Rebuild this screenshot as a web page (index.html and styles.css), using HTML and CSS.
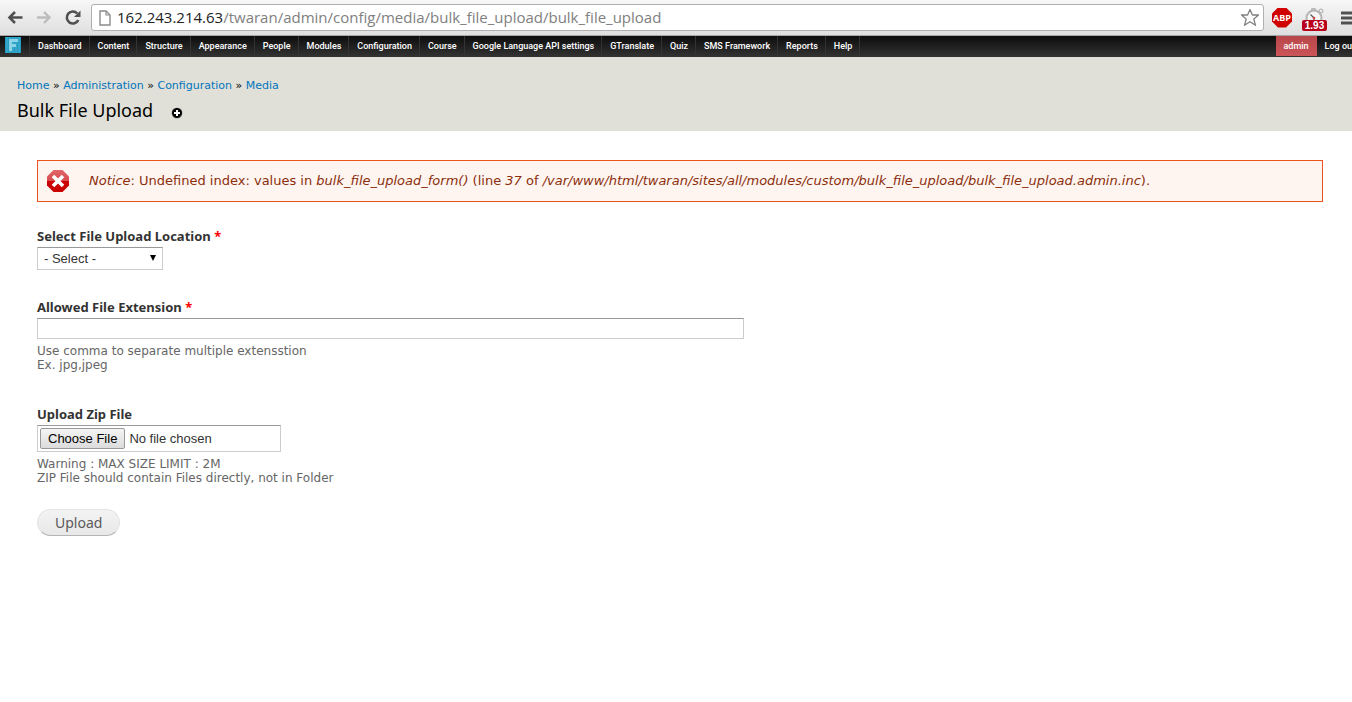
FILE: index.html
```html
<!DOCTYPE html>
<html lang="en">
<head>
    <meta charset="UTF-8">
    <meta name="viewport" content="width=device-width, initial-scale=1.0">
    <title>Bulk File Upload</title>
    <link rel="stylesheet" href="styles.css">
</head>
<body>
    <div class="browser-bar">
        <button class="nav-button" type="button" aria-label="Back">
            <svg width="16" height="16" viewBox="0 0 16 16"><path d="M8 2L2.500 7.500L8 13M3 7.500H15.500" fill="none" stroke="#505050" stroke-width="2.600"/></svg>
        </button>
        <button class="nav-button" type="button" aria-label="Forward">
            <svg width="16" height="16" viewBox="0 0 16 16"><path d="M8 2L13.500 7.500L8 13M13 7.500H1" fill="none" stroke="#bdbdbd" stroke-width="2.400"/></svg>
        </button>
        <button class="nav-button" type="button" aria-label="Reload">
            <svg width="16" height="16" viewBox="0 0 16 16"><path d="M13.300 10A6 6 0 1 1 12.300 3.500" fill="none" stroke="#505050" stroke-width="2.600"/><path d="M15.500 0.500V7H9z" fill="#505050"/></svg>
        </button>
        <div class="address-bar">
            <svg class="page-icon" width="12" height="16" viewBox="0 0 12 16"><path d="M1 1H7L11 5V15H1z" fill="#fff" stroke="#8c8c8c" stroke-width="1.400"/><path d="M7 1V5H11" fill="none" stroke="#8c8c8c" stroke-width="1.200"/></svg>
            <div class="address">162.243.214.63<span>/twaran/admin/config/media/bulk_file_upload/bulk_file_upload</span></div>
            <svg width="20" height="19" viewBox="0 0 20 19"><path d="M10 1.500L12.400 7H18.500L13.800 11L15.500 17.300L10 13.700L4.500 17.300L6.200 11L1.500 7H7.600z" fill="#fff" stroke="#808080" stroke-width="1.300" stroke-linejoin="round"/></svg>
        </div>
        <div class="extensions">
            <span class="abp">ABP</span>
            <div class="timer">
                <svg width="26" height="18" viewBox="0 0 26 18"><circle cx="19" cy="3" r="2" fill="#eee" stroke="#aaa"/><rect x="9" y="0" width="5" height="3" rx="1" fill="#bbb"/><circle cx="12" cy="10" r="7.500" fill="#f6f6f6" stroke="#b4b4b4" stroke-width="2"/><path d="M12 10L8.500 6.500M12 10V12" stroke="#555" stroke-width="1.200"/><circle cx="12" cy="10" r="1.300" fill="#c44"/></svg>
                <span class="timer-value">1.93</span>
            </div>
            <button class="nav-button" type="button" aria-label="Menu">
                <svg width="11" height="14" viewBox="0 0 11 14"><path d="M0 2H11M0 7H11M0 12H11" stroke="#505050" stroke-width="3"/></svg>
            </button>
        </div>
    </div>

    <nav class="toolbar">
        <a class="toolbar-home" href="#" aria-label="Home">
            <svg width="16" height="16" viewBox="0 0 16 16"><rect width="16" height="16" fill="#249cc2"/><path d="M2 0V16M5 0V16M8 0V16M11 0V16M14 0V16" stroke="#45b0d0" stroke-width="1"/><path d="M4 2H13V5H7V7H11V10H7V14H4z" fill="#8bd3e6"/></svg>
        </a>
        <ul class="toolbar-menu">
            <li><a href="#">Dashboard</a></li>
            <li><a href="#">Content</a></li>
            <li><a href="#">Structure</a></li>
            <li><a href="#">Appearance</a></li>
            <li><a href="#">People</a></li>
            <li><a href="#">Modules</a></li>
            <li><a href="#">Configuration</a></li>
            <li><a href="#">Course</a></li>
            <li><a href="#">Google Language API settings</a></li>
            <li><a href="#">GTranslate</a></li>
            <li><a href="#">Quiz</a></li>
            <li><a href="#">SMS Framework</a></li>
            <li><a href="#">Reports</a></li>
            <li><a href="#">Help</a></li>
        </ul>
        <div class="toolbar-user">
            <a class="account" href="#">admin</a>
            <a href="#">Log out</a>
        </div>
    </nav>

    <header class="branding">
        <div class="breadcrumb">
            <a href="#">Home</a> » <a href="#">Administration</a> » <a href="#">Configuration</a> » <a href="#">Media</a>
        </div>
        <div class="title-row">
            <h1>Bulk File Upload</h1>
            <a class="add-shortcut" href="#" aria-label="Add to shortcuts">
                <svg width="12" height="12" viewBox="0 0 12 12"><circle cx="6" cy="6" r="5.500" fill="#000" stroke="#fff" stroke-width="0.600"/><path d="M6 3V9M3 6H9" stroke="#fff" stroke-width="2"/></svg>
            </a>
        </div>
    </header>

    <main class="page">
        <div class="message-error">
            <svg width="24" height="24" viewBox="0 0 24 24">
                <defs><linearGradient id="stop" x1="0" y1="0" x2="0" y2="1"><stop offset="0" stop-color="#e0676b"/><stop offset="0.480" stop-color="#d94a4e"/><stop offset="0.520" stop-color="#cc0408"/><stop offset="1" stop-color="#c80000"/></linearGradient></defs>
                <path d="M7.500 1H16.500L23 7.500V16.500L16.500 23H7.500L1 16.500V7.500z" fill="url(#stop)"/>
                <path d="M7 7L17 17M17 7L7 17" stroke="#fff" stroke-width="3.600"/>
            </svg>
            <p><em>Notice</em>: Undefined index: values in <em>bulk_file_upload_form()</em> (line <em>37</em> of <em>/var/www/html/twaran/sites/all/modules/custom/bulk_file_upload/bulk_file_upload.admin.inc</em>).</p>
        </div>

        <form>
            <div class="form-item">
                <label for="location">Select File Upload Location <span class="required">*</span></label>
                <div class="select-wrap">
                    <select id="location">
                        <option>- Select -</option>
                    </select>
                </div>
            </div>
            <div class="form-item described">
                <label for="extension">Allowed File Extension <span class="required">*</span></label>
                <input class="text-input" type="text" id="extension">
                <div class="description">Use comma to separate multiple extensstion<br>Ex. jpg,jpeg</div>
            </div>
            <div class="form-item">
                <label for="zip-file">Upload Zip File</label>
                <input class="file-input" type="file" id="zip-file">
                <div class="description">Warning : MAX SIZE LIMIT : 2M<br>ZIP File should contain Files directly, not in Folder</div>
            </div>
            <button class="submit" type="button">Upload</button>
        </form>
    </main>
</body>
</html>
```
FILE: styles.css
```css
* {
    box-sizing: border-box;
}
body {
    margin: 0;
    background: #fff;
    color: #333;
    font-family: "Noto Sans", sans-serif;
    font-size: 12px;
    overflow-x: hidden;
}
svg {
    display: block;
    flex-shrink: 0;
}

/* Browser bar */
.browser-bar {
    display: flex;
    align-items: center;
    gap: 13px;
    height: 36px;
    padding-left: 7px;
    background: linear-gradient(#f7f7f7, #dfdfdf);
    border-bottom: 1px solid #a5a5a5;
}
.nav-button {
    padding: 0;
    border: 0;
    background: none;
}
.address-bar {
    flex: 1;
    display: flex;
    align-items: center;
    gap: 6px;
    height: 27px;
    margin-left: -3px;
    padding: 0 3px 0 7px;
    background: #fff;
    border: 1px solid #b0b0b0;
    border-radius: 3px;
}
.address {
    flex: 1;
    color: #222;
    font-family: "Open Sans", sans-serif;
    font-size: 15px;
    line-height: 22px;
    padding-bottom: 2px;
    white-space: nowrap;
}
.address span {
    color: #808080;
}
.extensions {
    display: flex;
    align-items: center;
    gap: 10px;
    margin-left: -5px;
}
.abp {
    width: 20px;
    height: 20px;
    background: #d10000;
    clip-path: polygon(30% 0, 70% 0, 100% 30%, 100% 70%, 70% 100%, 30% 100%, 0 70%, 0 30%);
    color: #fff;
    font: bold 9px/20px "Open Sans", sans-serif;
    text-align: center;
}
.timer {
    padding-top: 4px;
    margin-right: 3px;
}
.timer-value {
    display: block;
    width: 25px;
    height: 11px;
    margin-top: -6px;
    position: relative;
    background: #b8001c;
    border-radius: 2px;
    color: #fff;
    font: bold 10px/11px "Liberation Sans", sans-serif;
    text-align: center;
}

/* Toolbar */
.toolbar {
    display: flex;
    height: 21px;
    background: linear-gradient(#0d0d0d, #333);
    font-family: Roboto, sans-serif;
    font-size: 9px;
    font-weight: 500;
    line-height: 20px;
    white-space: nowrap;
}
.toolbar a {
    display: block;
    padding: 0 7px 0 8px;
    color: #fff;
    text-decoration: none;
}
.toolbar .toolbar-home {
    padding: 1px 8px 0 5px;
}
.toolbar-menu {
    display: flex;
    margin: 0;
    padding: 0;
    list-style: none;
}
.toolbar-menu li {
    border-left: 1px solid #333;
}
.toolbar-menu li:last-child {
    border-right: 1px solid #333;
}
.toolbar-user {
    display: flex;
    margin-left: auto;
    margin-right: -10px;
}
.toolbar .account {
    height: 20px;
    padding: 0 8px;
    background: linear-gradient(#b8474a, #cb5457);
}

/* Page header */
.branding {
    height: 74px;
    padding: 21px 17px 0;
    background: #e0e0d8;
    color: #000;
}
.breadcrumb {
    font-family: "DejaVu Sans", sans-serif;
    font-size: 11px;
    line-height: 16px;
}
.breadcrumb a {
    color: #0074bd;
    text-decoration: none;
}
.title-row {
    display: flex;
    align-items: center;
    gap: 18px;
    padding-top: 3px;
}
h1 {
    margin: 0;
    font-size: 18px;
    font-weight: normal;
    line-height: 26px;
}
.add-shortcut {
    padding-top: 5px;
}

/* Content */
.page {
    padding: 29px 29px 20px 37px;
}
.message-error {
    display: flex;
    align-items: center;
    gap: 19px;
    min-height: 42px;
    margin-bottom: 25px;
    padding: 0 8px;
    background: #fef5f1;
    border: 1px solid #ed541d;
    color: #8c2e0b;
}
.message-error p {
    margin: 0;
    font-family: "DejaVu Sans", sans-serif;
    font-size: 13px;
    line-height: 18px;
}
.form-item {
    margin-bottom: 28px;
}
.form-item.described {
    margin-bottom: 33px;
}
.form-item:last-of-type {
    margin-bottom: 24px;
}
.form-item label {
    display: block;
    margin-bottom: 2px;
    font-size: 13px;
    font-weight: bold;
    line-height: 18px;
}
.required {
    color: #f00;
}
.select-wrap {
    position: relative;
    width: 126px;
}
.select-wrap::after {
    content: "";
    position: absolute;
    top: 8px;
    right: 7px;
    border: 3px solid transparent;
    border-top: 6px solid #000;
    border-bottom: 0;
    pointer-events: none;
}
select,
.text-input,
.file-input {
    display: block;
    background: #fff;
    border: 1px solid #ccc;
    border-top-color: #999;
    border-radius: 0;
    color: #333;
    font: 13px "Liberation Sans", sans-serif;
}
select {
    width: 100%;
    height: 23px;
    padding: 0 6px;
    appearance: none;
}
.text-input {
    width: 55%;
    height: 21px;
    padding: 2px;
}
.file-input {
    width: 244px;
    height: 27px;
    padding: 2px;
}
.file-input::file-selector-button {
    height: 21px;
    margin: 0 4px 0 0;
    padding: 0 7px;
    background: linear-gradient(#f4f4f4, #dcdcdc);
    border: 1px solid #999;
    border-radius: 2px;
    color: #000;
    font: 13px "Liberation Sans", sans-serif;
}
.description {
    margin-top: 5px;
    color: #666;
    font-family: "DejaVu Sans", sans-serif;
    font-size: 12px;
    line-height: 14px;
}
.submit {
    height: 27px;
    padding: 0 17px;
    background: linear-gradient(#f3f3f3, #e8e8e8);
    border: 1px solid #e4e4e4;
    border-bottom-color: #b4b4b4;
    border-radius: 14px;
    color: #5a5a5a;
    font: 14px "Noto Sans", sans-serif;
}
```
